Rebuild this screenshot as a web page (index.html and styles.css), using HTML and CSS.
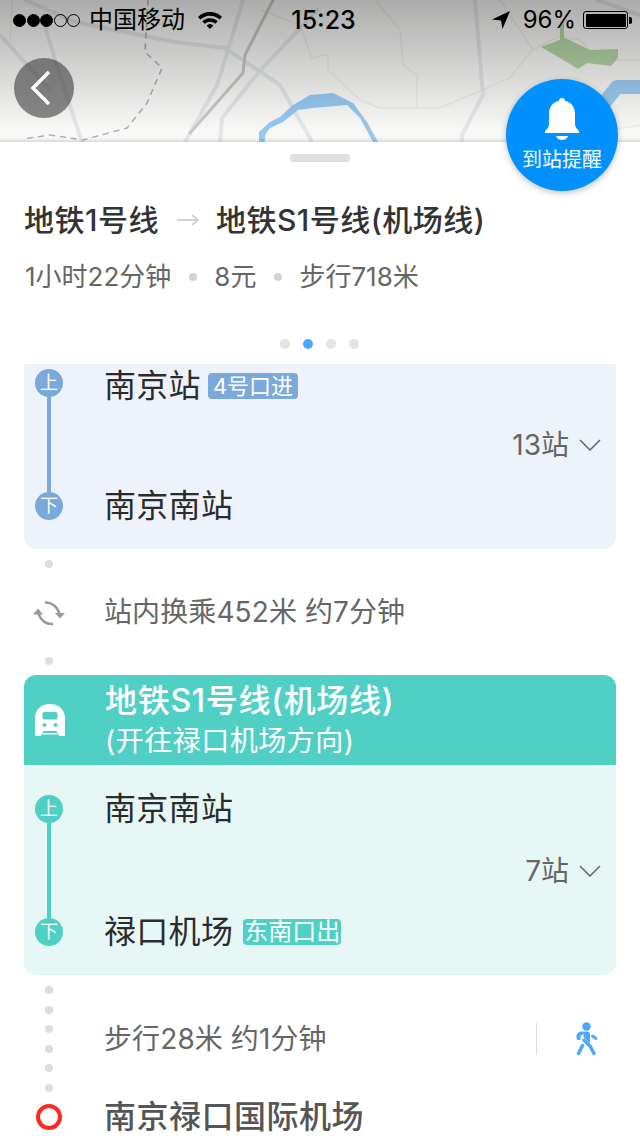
FILE: index.html
```html
<!DOCTYPE html>
<html lang="zh-CN">
<head>
<meta charset="utf-8">
<title>路线详情</title>
<link rel="stylesheet" href="styles.css">
</head>
<body>
<div class="phone">
  <header class="map">
    <svg class="map-art" width="640" height="142" viewBox="0 0 640 142">
      <g fill="none" stroke-linejoin="round" stroke-linecap="round">
        <g stroke="#eeece6" stroke-width="1.500">
          <path d="M12 0L10 45"/>
          <path d="M375 0L400 30L403 65L417 75V108"/>
          <path d="M320 55H328V70L360 100L380 108H440L510 78L532 50L560 36L580 40L600 60H640"/>
          <path d="M262 10L300 25L312 58L325 55"/>
          <path d="M500 0L533 50"/>
          <path d="M600 132L640 125"/>
        </g>
        <g stroke="#e3e7e9" stroke-width="4">
          <path d="M25 0L75 22L175 42L225 48L280 85L312 142"/>
          <path d="M243 0L225 60L217 85L185 142"/>
          <path d="M317 10L258 73L222 118L220 142"/>
          <path d="M0 35L50 90"/>
          <path d="M45 27L60 75L82 142"/>
          <path d="M475 0L483 95L462 135V142"/>
          <path d="M597 0L640 15"/>
        </g>
        <path d="M273 0L245 55L243 73L190 133" stroke="#c8c8c6" stroke-width="3"/>
        <path d="M148 0L145 52L162 68L147 103L127 128L83 140L50 135L23 139" stroke="#b0b0b0" stroke-width="1.500" stroke-dasharray="5 6"/>
        <path d="M562 24V40" stroke="#b5d4a6" stroke-width="4"/>
        <path d="M600 108L617 87H640" stroke="#9ccbf3" stroke-width="14"/>
      </g>
      <path d="M259 142V132L270 122L280 117L293 105L310 95L333 93L353 103L367 122L378 142H373L360 118L347 105L313 108L298 110L283 122L270 128L265 135V142Z" fill="#96c8f2"/>
      <path d="M541 47L565 38L590 50L618 49L618 58L611 66L587 63L578 69L560 58Z" fill="#b5d4a6"/>
    </svg>
    <div class="status">
      <div class="status-side">
        <span class="signal"><i class="on"></i><i class="on"></i><i class="on"></i><i></i><i></i></span>
        <span class="carrier">中国移动</span>
        <svg class="wifi" width="24" height="18" viewBox="0 0 24 18"><path d="M0 6A17 17 0 0 1 24 6L21.6 8.6A13.6 13.6 0 0 0 2.400 8.600Z"/><path d="M4.300 10.300A11 11 0 0 1 19.700 10.300L17.300 12.800A7.600 7.600 0 0 0 6.700 12.800Z"/><path d="M8.600 14.600A5 5 0 0 1 15.400 14.600L12 18Z"/></svg>
      </div>
      <span class="clock">15:23</span>
      <div class="status-side status-right">
        <svg class="locate" width="18" height="18" viewBox="0 0 18 18"><path d="M18 0L0 8.500L9 9.500L10.500 18Z"/></svg>
        <span class="percent">96%</span>
        <span class="battery"><span class="battery-fill"></span></span>
        <span class="battery-tip"></span>
      </div>
    </div>
    <button class="back" type="button" aria-label="返回">
      <svg width="24" height="36" viewBox="0 0 24 36"><path d="M20 2L4 18L20 34" fill="none" stroke="#fff" stroke-width="3.500"/></svg>
    </button>
  </header>

  <button class="remind" type="button">
    <svg width="34" height="42" viewBox="0 0 34 42"><path d="M17 0a3 3 0 0 1 3 2.800C27 4.500 30 10 30 16V26C30 29 32 31 34 33V35H0V33C2 31 4 29 4 26V16C4 10 7 4.500 14 2.800A3 3 0 0 1 17 0Z" fill="#fff"/><path d="M11 38H23C22 41 19 42 17 42S12 41 11 38Z" fill="#fff"/></svg>
    <span>到站提醒</span>
  </button>

  <main class="sheet">
    <div class="handle"></div>
    <h1 class="route">
      <span>地铁1号线</span>
      <svg class="route-arrow" width="22" height="12" viewBox="0 0 22 12"><path d="M0 6H20M15 1L21 6L15 11" fill="none" stroke="#d2d2d2" stroke-width="2"/></svg>
      <span>地铁S1号线(机场线)</span>
    </h1>
    <p class="summary">
      <span>1小时22分钟</span><i class="sep"></i><span>8元</span><i class="sep"></i><span>步行718米</span>
    </p>
    <div class="pager"><i></i><i class="active"></i><i></i><i></i></div>

    <section class="card card-blue card-clipped">
      <div class="stop stop-first"><span class="badge-circle">上</span><span class="stop-name">南京站</span><span class="tag">4号口进</span></div>
      <div class="span-row"><span class="track"><i></i></span><span class="count">13站<svg width="22" height="12" viewBox="0 0 22 12"><path d="M1 1L11 11L21 1" fill="none" stroke="#666" stroke-width="1.500"/></svg></span></div>
      <div class="stop"><span class="badge-circle">下</span><span class="stop-name">南京南站</span></div>
    </section>

    <section class="link link-transfer">
      <div class="rail rail-transfer">
        <i class="dot"></i>
        <svg width="32" height="28" viewBox="0 0 32 28"><g fill="none" stroke="#999" stroke-width="2.500"><path d="M12 3.500C18 3 24 7 26.500 14.500"/><path d="M20 25C13 25.500 8 21 5.500 15"/></g><path d="M22 14H32L27 19.500ZM0 15.500H10L5 9.500Z" fill="#999"/></svg>
        <i class="dot"></i>
      </div>
      <span class="link-text">站内换乘452米 约7分钟</span>
    </section>

    <section class="card card-green">
      <div class="line-head">
        <svg class="train" width="30" height="32" viewBox="0 0 30 32"><path fill-rule="evenodd" d="M15 0C24 0 30 6 30 14V32H24L21.500 27H8.500L6 32H0V14C0 6 6 0 15 0ZM9 8A1.500 1.500 0 0 0 7.500 9.500V14A1.500 1.500 0 0 0 9 15.500H21A1.500 1.500 0 0 0 22.500 14V9.500A1.500 1.500 0 0 0 21 8ZM9.500 19A2 2 0 1 0 9.500 23A2 2 0 1 0 9.500 19ZM20.500 19A2 2 0 1 0 20.500 23A2 2 0 1 0 20.500 19Z" fill="#fff"/><path d="M8 29H22V30.500H8Z" fill="#fff"/></svg>
        <div class="line-text">
          <div class="line-name">地铁S1号线(机场线)</div>
          <div class="line-dir">(开往禄口机场方向)</div>
        </div>
      </div>
      <div class="line-body">
        <div class="stop"><span class="badge-circle">上</span><span class="stop-name">南京南站</span></div>
        <div class="span-row"><span class="track"><i></i></span><span class="count">7站<svg width="22" height="12" viewBox="0 0 22 12"><path d="M1 1L11 11L21 1" fill="none" stroke="#666" stroke-width="1.500"/></svg></span></div>
        <div class="stop"><span class="badge-circle">下</span><span class="stop-name">禄口机场</span><span class="tag tag-wide">东南口出</span></div>
      </div>
    </section>

    <section class="link link-walk">
      <div class="rail rail-walk"><i class="dot"></i><i class="dot"></i><i class="dot"></i><i class="dot"></i><i class="dot"></i><i class="dot"></i></div>
      <span class="link-text">步行28米 约1分钟</span>
      <span class="walk-action">
        <svg width="24" height="34" viewBox="0 0 24 34"><circle cx="11.500" cy="4.500" r="4.300" fill="#4ba9fb"/><path d="M6 9.500H12Q15 9.500 15 12.500V21L8.500 15V12L5.500 14V18H3Q1.500 18 1.500 16V13Q3 9.500 6 9.500Z" fill="#4ba9fb"/><path d="M9 18L15 24L19 31.500" fill="none" stroke="#4ba9fb" stroke-width="3.500" stroke-linecap="round"/><path d="M7.500 23.500L3.500 31.500" fill="none" stroke="#4ba9fb" stroke-width="3.500" stroke-linecap="round"/><path d="M17.500 14L21 16.500" fill="none" stroke="#4ba9fb" stroke-width="3" stroke-linecap="round"/></svg>
      </span>
    </section>

    <section class="terminal">
      <span class="ring-col"><i class="ring"></i></span>
      <span class="terminal-name">南京禄口国际机场</span>
    </section>
  </main>
</div>
</body>
</html>
```
FILE: styles.css
```css
* { box-sizing: border-box; }
html, body { margin: 0; padding: 0; }
body {
  width: 640px;
  height: 1136px;
  overflow: hidden;
  background: #fff;
  font-family: Inter, "Noto Sans CJK SC", sans-serif;
  color: #333;
}
i { display: block; font-style: normal; }
button { border: 0; padding: 0; font: inherit; }
.phone { position: relative; width: 640px; height: 1136px; overflow: hidden; }

/* map header */
.map {
  position: relative;
  height: 142px;
  background: #f8f8f7;
  overflow: hidden;
}
.map::after {
  content: "";
  position: absolute;
  inset: 0;
  background:
    linear-gradient(to top, rgba(0,0,0,.12) 0, rgba(0,0,0,0) 4px),
    linear-gradient(to bottom, rgba(0,0,0,.31) 0%, rgba(0,0,0,0) 92%);
}
.map-art { position: absolute; left: 0; top: 0; }
.status {
  position: relative;
  z-index: 1;
  height: 40px;
  display: flex;
  align-items: center;
  justify-content: space-between;
  padding: 0 8px 0 13px;
  color: #000;
}
.status-side { display: flex; align-items: center; width: 250px; }
.status-right { justify-content: flex-end; }
.signal { display: flex; gap: 0.5px; }
.signal i {
  width: 13px;
  height: 13px;
  border-radius: 50%;
  border: 1px solid #000;
}
.signal i.on { background: #000; }
.carrier { font-size: 24px; line-height: 40px; margin-left: 9px; }
.wifi { margin-left: 13px; fill: #000; }
.clock { font-size: 25px; font-weight: 500; line-height: 40px; margin-left: 2px; }
.locate { fill: #000; margin-right: 13px; }
.percent { font-size: 24px; line-height: 40px; margin-right: 7px; }
.battery {
  width: 45px;
  height: 18px;
  border: 1.5px solid #000;
  border-radius: 3px;
  padding: 1.5px;
}
.battery-fill { display: block; height: 100%; background: #000; border-radius: 1px; }
.battery-tip { width: 3px; height: 7px; background: #000; border-radius: 0 2px 2px 0; margin-left: 1px; }
.back {
  position: absolute;
  z-index: 1;
  left: 14px;
  top: 58px;
  width: 60px;
  height: 60px;
  border-radius: 50%;
  background: rgba(60,60,60,.6);
  display: flex;
  align-items: center;
  justify-content: center;
  padding-right: 6px;
}

/* floating reminder */
.remind {
  position: absolute;
  z-index: 2;
  left: 506px;
  top: 79px;
  width: 112px;
  height: 112px;
  border-radius: 50%;
  background: #0091ff;
  box-shadow: 0 2px 6px rgba(0,0,0,.25);
  color: #fff;
  display: flex;
  flex-direction: column;
  align-items: center;
  padding-top: 19px;
}
.remind span { font-size: 20px; line-height: 26px; margin-top: 7px; }

/* sheet */
.sheet { padding-top: 12px; }
.handle { width: 60px; height: 8px; margin: 0 auto; border-radius: 4px; background: #e0e0e0; }
.route {
  margin: 38px 0 0;
  padding-left: 24px;
  height: 40px;
  display: flex;
  align-items: center;
  font-size: 30px;
  font-weight: 500;
  line-height: 40px;
  letter-spacing: 0.5px;
  color: #333;
}
.route-arrow { margin: 0 17px 0 18px; }
.summary {
  margin: 17px 0 0;
  padding-left: 25px;
  height: 40px;
  display: flex;
  align-items: center;
  font-size: 26px;
  line-height: 40px;
  color: #666;
}
.sep { width: 8px; height: 8px; border-radius: 50%; background: #d2d2d2; margin: 0 17.5px; }
.pager {
  height: 10px;
  margin-top: 42px;
  padding-right: 2px;
  display: flex;
  justify-content: center;
  gap: 13px;
}
.pager i { width: 10px; height: 10px; border-radius: 50%; background: #e4e4e4; }
.pager i.active { background: #4ba9fb; }

/* cards */
.card {
  margin: 15px 24px 0;
  border-radius: 12px;
  overflow: hidden;
}
.card-blue {
  --line: #7aaadc;
  background: #eef3fb;
  padding: 5px 0 29px;
}
.card-clipped { border-top-left-radius: 0; border-top-right-radius: 0; }
.card-green { --line: #4fd0c5; margin-top: 0; background: #e6f7f6; }
.line-head {
  height: 90px;
  background: #50d0c5;
  display: flex;
  align-items: center;
  color: #fff;
}
.train { margin-left: 11px; flex: none; }
.line-text { margin-left: 40px; white-space: nowrap; }
.line-name { font-size: 32px; font-weight: 500; line-height: 44px; letter-spacing: 0.7px; margin-top: -2px; }
.line-dir { font-size: 28px; line-height: 36px; letter-spacing: 0.5px; }
.line-body { padding: 30px 0 29px; }
.stop { height: 28px; display: flex; align-items: center; padding-left: 11px; }
.badge-circle {
  width: 28px;
  height: 28px;
  flex: none;
  border-radius: 50%;
  background: var(--line);
  color: #fff;
  font-size: 18px;
  line-height: 28px;
  text-align: center;
}
.stop-name {
  margin-left: 41px;
  font-size: 32px;
  line-height: 40px;
  letter-spacing: 0.3px;
  color: #2c2c2c;
  white-space: nowrap;
}
.stop-first .stop-name, .stop-first .tag { margin-top: 6px; }
.tag {
  margin-left: 7px;
  height: 26px;
  padding: 0 5px;
  border-radius: 4px;
  background: var(--line);
  color: #fff;
  font-size: 22px;
  line-height: 26px;
  white-space: nowrap;
}
.tag-wide { margin-left: 10px; font-size: 24px; padding: 0 1px; }
.span-row {
  height: 95px;
  display: flex;
  align-items: center;
  justify-content: space-between;
  padding: 0 15px 0 23px;
}
.track { align-self: stretch; width: 4px; }
.track i { width: 4px; height: 100%; background: var(--line); }
.count {
  display: flex;
  align-items: center;
  gap: 10px;
  font-size: 28px;
  line-height: 40px;
  color: #666;
}

/* connectors */
.link { display: flex; align-items: center; margin: 0 24px; }
.dot { width: 8px; height: 8px; border-radius: 50%; background: #ddd; }
.rail { width: 50px; flex: none; display: flex; flex-direction: column; align-items: center; align-self: stretch; }
.rail-transfer { justify-content: space-between; padding: 11px 0 10px; }
.rail-walk { gap: 11.5px; padding-top: 11px; }
.link-transfer { height: 126px; }
.link-walk { height: 128px; }
.link-text { margin-left: 30px; font-size: 28px; line-height: 40px; letter-spacing: 0.1px; color: #666; white-space: nowrap; }
.walk-action {
  margin-left: auto;
  height: 32px;
  display: flex;
  align-items: center;
  border-left: 1px solid #ddd;
  padding: 0 17px 0 38px;
}
.terminal { display: flex; align-items: center; height: 28px; margin: 0 24px; }
.ring-col { width: 50px; display: flex; justify-content: center; flex: none; }
.ring { width: 26px; height: 26px; border: 4px solid #ff2a1e; border-radius: 50%; }
.terminal-name { margin-left: 30px; font-size: 32px; font-weight: 500; line-height: 40px; letter-spacing: 0.5px; color: #555; white-space: nowrap; }
```
